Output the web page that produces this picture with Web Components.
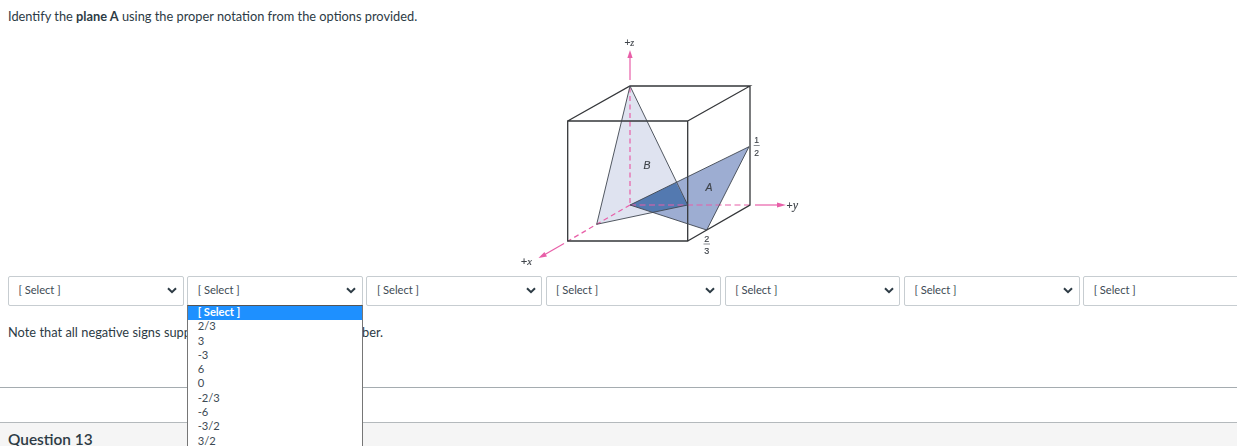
<!DOCTYPE html>
<html lang="en"><head><meta charset="utf-8"><title>Question</title>
<style>
html,body{margin:0;padding:0;background:#fff;height:446px;overflow:hidden}
body{font:12.8px/18px Lato,"Open Sans",sans-serif;color:#2d3b45}
</style></head><body>
<quiz-page>
  <span slot="prompt">Identify the <b>plane A</b> using the proper notation from the options provided.</span>
  <plane-figure slot="figure"></plane-figure>
  <select-box slot="selects"></select-box>
  <select-box slot="selects" open></select-box>
  <select-box slot="selects"></select-box>
  <select-box slot="selects"></select-box>
  <select-box slot="selects"></select-box>
  <select-box slot="selects"></select-box>
  <select-box slot="selects"></select-box>
  <span slot="note">Note that all negative signs supplied belong in front of the number.</span>
  <span slot="next">Question 13</span>
</quiz-page>
<script>
class QuizPage extends HTMLElement{
  constructor(){super();this.attachShadow({mode:'open'}).innerHTML=`
  <style>
  :host{display:block;width:1237px;height:446px;overflow:hidden}
  .prompt{padding:7px 8px 0;height:23px;white-space:nowrap}
  .figure{height:245.5px;display:flex;align-items:flex-start;padding-left:510px}
  .selects{display:flex;gap:3.5px;padding-left:8px;height:30px;position:relative;z-index:2}
  .note{padding:17px 8px 0;height:64px;white-space:nowrap;word-spacing:.13px}
  .rule{height:1px;background:#a5acb0}
  .gap{height:34px}
  .next{height:24px;background:#f5f5f5;border-top:1px solid #b4b9bc;padding:7px 8px 0;font-size:15.4px;line-height:18px;color:#2d3b45;white-space:nowrap;font-weight:600}
  </style>
  <div class="prompt"><slot name="prompt"></slot></div>
  <div class="figure"><slot name="figure"></slot></div>
  <div class="selects"><slot name="selects"></slot></div>
  <div class="note"><slot name="note"></slot></div>
  <div class="rule"></div>
  <div class="gap"></div>
  <div class="next"><slot name="next"></slot></div>`;}
}
class PlaneFigure extends HTMLElement{
  constructor(){super();this.attachShadow({mode:'open'}).innerHTML=`
  <style>
  :host{display:block;width:310px;height:240px}
  svg{display:block;filter:blur(.3px)}
  text{font-family:"Liberation Sans",Arial,sans-serif;fill:#3f444a;stroke:#3f444a;stroke-width:.15}
  .s{font-family:"Liberation Serif",serif;font-style:italic}
  .ax{stroke:#e85fa8;stroke-width:1.2;fill:none}
  .cube{stroke:#35373a;stroke-width:1.3;fill:none}
  .edge{stroke:#3f4650;stroke-width:.9;fill:none}
  </style>
  <svg width="310" height="240" viewBox="510 30 310 240">
    <path d="M630 86 L596.7 224.3 L687.7 205 Z" fill="#dfe3f0"/>
    <path d="M630 205 L749 146.7 L706.7 230 Z" fill="#9dadd2"/>
    <path d="M630 205 L676 182.7 L687.7 205 L653.3 212.3 Z" fill="#5379b0"/>
    <path class="ax" stroke-dasharray="5 3.5" d="M630 203 V88"/>
    <path class="ax" d="M630 80 V55"/><path d="M630 50 l-2.6 8 h5.2 Z" fill="#e85fa8"/>
    <path class="ax" stroke-dasharray="6 3.5" d="M630 205 H750"/>
    <path class="ax" d="M755 205 H780"/><path d="M786 205 l-9 -2.6 v5.2 Z" fill="#e85fa8"/>
    <path class="ax" stroke-dasharray="5 3.5" d="M630 205 L568 241"/>
    <path class="ax" d="M564 243.5 L544 255"/><path d="M538.5 258 l8.5 -1.6 l-2.6 -4.5 Z" fill="#e85fa8"/>
    <path class="cube" d="M567.7 121 H687.7 V241 H567.7 Z M567.7 121 L630 86 H750 L687.7 121 M750 86 V205 L687.7 241"/>
    <path class="edge" d="M630 86 L596.7 224.3 L687.7 205 Z"/>
    <path class="edge" d="M630 205 L749 146.7 L706.7 230 Z"/>
    <text x="624.5" y="46" font-size="10">+<tspan class="s">z</tspan></text>
    <text x="786.5" y="208.5" font-size="10.5">+<tspan class="s" font-size="12">y</tspan></text>
    <text x="521" y="265" font-size="10.5">+<tspan class="s">x</tspan></text>
    <text x="643.5" y="169" font-size="10.5" style="font-style:italic">B</text>
    <text x="705.5" y="191" font-size="10.5" style="font-style:italic">A</text>
    <text x="756.7" y="143" font-size="8.5" text-anchor="middle">1</text>
    <path d="M753.7 145.5 h6" stroke="#6b7076" stroke-width=".8"/>
    <text x="756.7" y="155.5" font-size="8.5" text-anchor="middle">2</text>
    <text x="706.7" y="241.5" font-size="9" text-anchor="middle">2</text>
    <path d="M703.5 244 h6.5" stroke="#6b7076" stroke-width=".8"/>
    <text x="706.7" y="253.5" font-size="9" text-anchor="middle">3</text>
  </svg>`;}
}
class SelectBox extends HTMLElement{
  constructor(){super();
    const opts=['[ Select ]','2/3','3','-3','6','0','-2/3','-6','-3/2','3/2'];
    this.attachShadow({mode:'open'}).innerHTML=`
    <style>
    :host{display:block;flex:0 0 175.7px;width:175.7px;height:30px;position:relative}
    .box{box-sizing:border-box;height:30px;background:#fff;border:1px solid #c7cdd1;border-radius:2px;padding:0 9.5px 2px;display:flex;align-items:center;justify-content:space-between;font-size:11.2px;letter-spacing:-.04px;color:#3d4a54}
    svg{display:block;margin-right:-4px;margin-top:2px}
    .list{display:none;position:absolute;left:0;top:29.5px;width:175.7px;height:150px;box-sizing:border-box;background:#fff;border:1px solid #767676;border-top-color:#555;font-size:11.2px;letter-spacing:-.04px;line-height:12px;color:#3d4a54;overflow:hidden}
    :host([open]) .list{display:block}
    .o{padding:0 0 0 9.5px;height:14.3px;white-space:pre}
    .o.sel{background:#1e90ff;color:#fff;font-weight:700}
    </style>
    <div class="box"><span>[ Select ]</span>
      <svg width="10" height="7" viewBox="0 0 10 7"><path d="M1 1.2 L5 5.2 L9 1.2" fill="none" stroke="#2d3b45" stroke-width="2"/></svg></div>
    <div class="list">${opts.map((o,i)=>`<div class="o${i==0?' sel':''}">${o}</div>`).join('')}</div>`;
  }
}
customElements.define('quiz-page',QuizPage);
customElements.define('plane-figure',PlaneFigure);
customElements.define('select-box',SelectBox);
</script>
</body></html>
